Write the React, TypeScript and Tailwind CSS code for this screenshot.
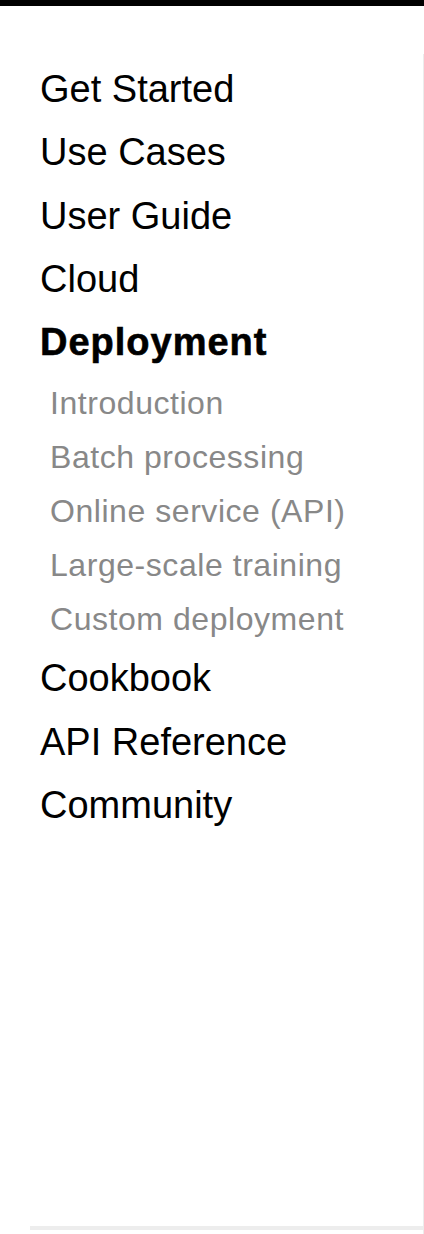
import React from "react";

const main1 = ["Get Started", "Use Cases", "User Guide", "Cloud"];
const subs = [
  "Introduction",
  "Batch processing",
  "Online service (API)",
  "Large-scale training",
  "Custom deployment",
];
const main2 = ["Cookbook", "API Reference", "Community"];

export default function App() {
  return (
    <div
      className="w-[424px] h-[1234px] bg-white flex flex-col overflow-hidden"
      style={{ fontFamily: '"Liberation Sans", Arial, sans-serif' }}
    >
      <div className="h-[6px] bg-black shrink-0" />
      <div className="mt-[48px] flex-1 flex flex-col border-r border-[#ececec]">
        <nav className="pt-[4px] pl-[40px] flex flex-col">
          {main1.map((t) => (
            <div key={t} className="text-[38px] leading-[63.25px] text-black whitespace-nowrap">
              {t}
            </div>
          ))}
          <div className="text-[38px] leading-[63.25px] text-black font-bold tracking-[1px] [-webkit-text-stroke:0.6px_black] whitespace-nowrap">
            Deployment
          </div>
          <div className="pl-[10px] pt-[2px] flex flex-col mb-[1px]">
            {subs.map((t) => (
              <div key={t} className="text-[32px] leading-[54px] tracking-[0.55px] text-[#888888] whitespace-nowrap">
                {t}
              </div>
            ))}
          </div>
          {main2.map((t) => (
            <div key={t} className="text-[38px] leading-[63.25px] text-black whitespace-nowrap">
              {t}
            </div>
          ))}
        </nav>
        <div className="mt-auto mb-[4px] ml-[30px] h-[4px] bg-[#ededed]" />
      </div>
    </div>
  );
}
